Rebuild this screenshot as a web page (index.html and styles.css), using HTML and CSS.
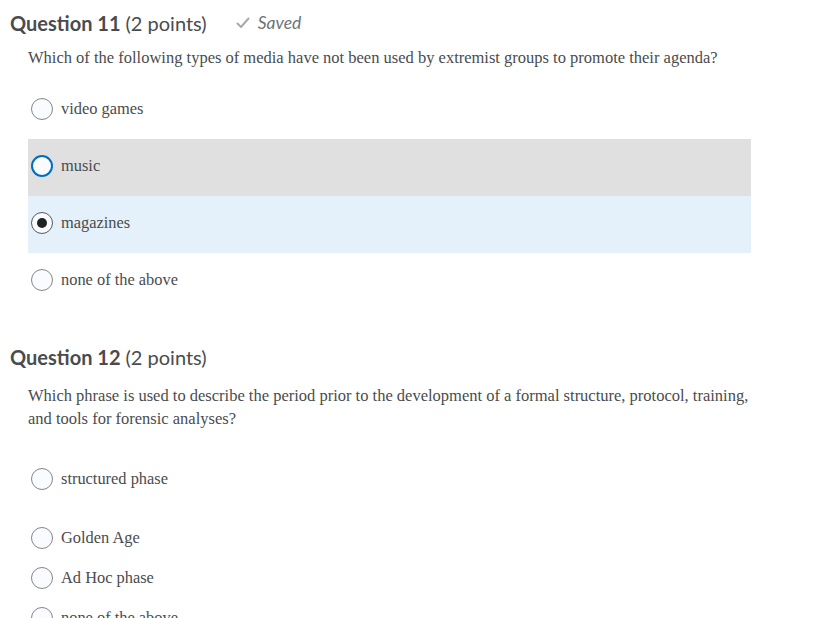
FILE: index.html
```html
<!DOCTYPE html>
<html lang="en">
<head>
<meta charset="utf-8">
<title>Quiz</title>
<link rel="stylesheet" href="styles.css">
</head>
<body>
<section class="question q11">
  <h2 class="q-title"><strong>Question 11</strong> (2 points) <span class="saved"><svg class="check" width="14" height="12" viewBox="0 0 14 12"><polyline points="1.5,6.5 5,10 12.5,1.5" fill="none" stroke="#a7a9ab" stroke-width="2" stroke-linecap="round" stroke-linejoin="round"/></svg><em>Saved</em></span></h2>
  <p class="q-text">Which of the following types of media have not been used by extremist groups to promote their agenda?</p>
  <div class="options tall">
    <label class="opt"><span class="radio"></span><span class="label">video games</span></label>
    <label class="opt hover"><span class="radio focus"></span><span class="label">music</span></label>
    <label class="opt selected"><span class="radio checked"></span><span class="label">magazines</span></label>
    <label class="opt"><span class="radio"></span><span class="label">none of the above</span></label>
  </div>
</section>
<section class="question q12">
  <h2 class="q-title"><strong>Question 12</strong> (2 points)</h2>
  <p class="q-text">Which phrase is used to describe the period prior to the development of a formal structure, protocol, training, and tools for forensic analyses?</p>
  <div class="options short">
    <label class="opt first"><span class="radio"></span><span class="label">structured phase</span></label>
    <label class="opt"><span class="radio"></span><span class="label">Golden Age</span></label>
    <label class="opt"><span class="radio"></span><span class="label">Ad Hoc phase</span></label>
    <label class="opt"><span class="radio"></span><span class="label">none of the above</span></label>
  </div>
</section>
</body>
</html>
```
FILE: styles.css
```css
html, body {
  margin: 0;
  padding: 0;
  background: #ffffff;
  overflow: hidden;
}
body {
  color: #494c4e;
  font-family: "Liberation Serif", "Times New Roman", serif;
}
.question {
  padding-left: 10px;
}
.q-title {
  margin: 0;
  font-family: Lato, "Liberation Sans", sans-serif;
  font-weight: 400;
  font-size: 20px;
  line-height: 26px;
  color: #494c4e;
  display: flex;
  align-items: center;
}
.q-title strong {
  font-weight: 700;
  margin-right: 5px;
}
.q11 .q-title {
  padding-top: 10px;
}
.saved {
  display: inline-flex;
  align-items: center;
  margin-left: 29px;
  color: #6e7376;
  font-size: 17.5px;
}
.saved .check {
  margin-right: 8px;
}
.saved em {
  font-style: italic;
}
.q-text {
  margin: 10px 0 0 18px;
  font-size: 16.5px;
  line-height: 23px;
  max-width: 725px;
}
.options {
  margin-left: 18px;
  width: 723px;
}
.q11 .options {
  margin-top: 13px;
}
.opt {
  display: flex;
  align-items: center;
  padding-left: 3px;
  box-sizing: border-box;
}
.tall .opt {
  height: 57px;
  padding-bottom: 4px;
}
.short .opt {
  height: 40px;
}
.short .opt.first {
  margin-bottom: 19px;
}
.opt.hover {
  background: #e0e0e0;
}
.opt.selected {
  background: #e4f1fa;
}
.radio {
  width: 22px;
  height: 22px;
  box-sizing: border-box;
  border: 1px solid #868686;
  border-radius: 50%;
  background: #f9fbff;
  flex: none;
  position: relative;
}
.radio.focus {
  border: 2px solid #006fbf;
}
.radio.checked {
  border: 1px solid #565a5c;
}
.radio.checked::after {
  content: "";
  position: absolute;
  left: 5px;
  top: 5px;
  width: 10px;
  height: 10px;
  border-radius: 50%;
  background: #202122;
}
.label {
  margin-left: 8px;
  font-size: 16.4px;
  line-height: 20px;
}
.q12 {
  margin-top: 34px;
}
.q12 .q-text {
  margin-top: 14px;
}
.q12 .options {
  margin-top: 29px;
}
```
